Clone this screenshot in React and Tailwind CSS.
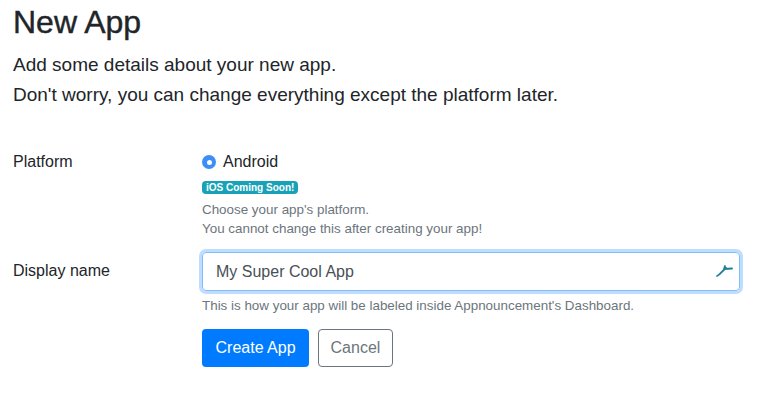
import { useState } from 'react'

export default function App() {
  const [name, setName] = useState('My Super Cool App')

  return (
    <div className="min-h-screen bg-white px-[13px] text-[#212529]" style={{ fontFamily: '"Liberation Sans", Arial, sans-serif' }}>
      {/* Header */}
      <h1 className="pt-[3px] text-[32px] font-medium leading-[38px] [-webkit-text-stroke:0.4px_#212529]">New App</h1>
      <p className="mt-[9px] text-[19px] leading-[30px]">Add some details about your new app.</p>
      <p className="text-[19px] leading-[30px]">Don't worry, you can change everything except the platform later.</p>

      <form className="mt-[40px] pr-[15px]" onSubmit={(e) => e.preventDefault()}>
        {/* Platform */}
        <div className="flex">
          <label className="w-[189px] shrink-0 text-[16px] leading-[24px]">Platform</label>
          <div>
            <div className="flex items-center gap-[7px]">
              <span className="flex h-[14px] w-[14px] items-center justify-center rounded-full bg-[#3d8ef7]">
                <span className="h-[5px] w-[5px] rounded-full bg-white" />
              </span>
              <span className="text-[16px] leading-[24px]">Android</span>
            </div>
            <span className="mt-[2px] inline-block rounded-[4px] bg-[#17a2b8] px-[4px] py-[1px] text-[10px] font-bold leading-[11px] text-white">
              iOS Coming Soon!
            </span>
            <p className="mt-[2px] text-[13.4px] leading-[19px] text-[#6c757d]">Choose your app's platform.</p>
            <p className="text-[13.4px] leading-[19px] text-[#6c757d]">You cannot change this after creating your app!</p>
          </div>
        </div>

        {/* Display name */}
        <div className="mt-[14px] flex">
          <label className="w-[189px] shrink-0 pt-[7px] text-[16px] leading-[24px]">Display name</label>
          <div className="flex-1">
            <div className="relative">
              <input
                value={name}
                onChange={(e) => setName(e.target.value)}
                className="h-[39px] w-full rounded-[4px] border border-[#80bdff] px-[13px] text-[16px] text-[#495057] shadow-[0_0_0_3px_rgba(0,123,255,0.25)] outline-none"
              />
              <svg className="absolute right-[5px] top-[11px]" width="20" height="16" viewBox="0 0 20 16" fill="none">
                <path d="M2 13 C5 12 7 8 11 5 M9 6 L17 5.5 M9 6 L10 3" stroke="#1f7f95" strokeWidth="1.8" strokeLinecap="round" />
              </svg>
            </div>
            <p className="mt-[5px] text-[13.4px] leading-[19px] text-[#6c757d]">This is how your app will be labeled inside Appnouncement's Dashboard.</p>
            <div className="mt-[14px] flex gap-[9px]">
              <button className="h-[38px] rounded-[4px] bg-[#007bff] px-[13.5px] text-[16px] text-white">Create App</button>
              <button type="button" className="h-[38px] rounded-[4px] border border-[#6c757d] px-[11.5px] text-[16px] text-[#6c757d]">Cancel</button>
            </div>
          </div>
        </div>
      </form>
    </div>
  )
}
